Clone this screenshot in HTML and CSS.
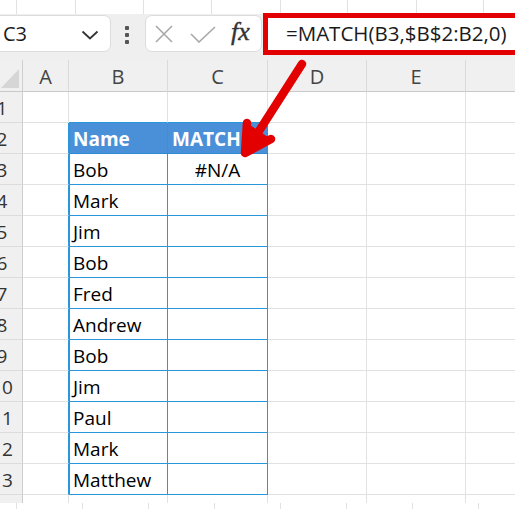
FILE: index.html
```html
<!DOCTYPE html>
<html>
<head>
<meta charset="utf-8">
<link rel="stylesheet" href="styles.css">
</head>
<body>
<div class="page">
  <div class="topstrip">
    <span class="ts w16"></span><span class="ts w59"></span><span class="ts w68"></span><span class="ts w68"></span><span class="ts w69"></span><span class="ts w67"></span><span class="ts w69"></span><span class="ts w67"></span>
  </div>
  <div class="toolbar">
    <div class="namebox">
      <span class="nbtext">C3</span>
      <svg class="chev" width="18" height="10" viewBox="0 0 18 10"><path d="M1.5 1.5 L9 8.5 L16.5 1.5" fill="none" stroke="#333" stroke-width="1.8"/></svg>
    </div>
    <svg class="dots" width="6" height="20" viewBox="0 0 6 20"><rect x="1" y="2" width="4" height="4" rx="1" fill="#555"/><rect x="1" y="9" width="4" height="4" rx="1" fill="#555"/><rect x="1" y="16" width="4" height="4" rx="1" fill="#555"/></svg>
    <div class="fxbox">
      <svg class="xic" width="18" height="18" viewBox="0 0 18 18"><path d="M1 1 L17 17 M17 1 L1 17" stroke="#a8a8a8" stroke-width="1.6" fill="none"/></svg>
      <svg class="chk" width="26" height="17" viewBox="0 0 26 17"><path d="M1 8 L9 16 L25 1" stroke="#a8a8a8" stroke-width="1.6" fill="none"/></svg>
      <span class="fx">fx</span>
    </div>
    <div class="formula">=MATCH(B3,$B$2:B2,0)</div>
  </div>
  <div class="grid">
    <div class="hd corner"><svg width="20" height="22" viewBox="0 0 20 22"><path d="M19 2 L19 21 L1 21 Z" fill="#d6d6d6"/></svg></div>
    <div class="hd">A</div><div class="hd">B</div><div class="hd">C</div><div class="hd">D</div><div class="hd">E</div><div class="hd last"></div>

    <div class="rh"><span>1</span></div><div class="c"></div><div class="c topb"></div><div class="c topb"></div><div class="c"></div><div class="c"></div><div class="c last"></div>

    <div class="rh"><span>2</span></div><div class="c ta"></div><div class="c tb th">Name</div><div class="c tc th">MATCH</div><div class="c"></div><div class="c"></div><div class="c last"></div>

    <div class="rh"><span>3</span></div><div class="c ta"></div><div class="c tb">Bob</div><div class="c tc ctr">#N/A</div><div class="c"></div><div class="c"></div><div class="c last"></div>

    <div class="rh"><span>4</span></div><div class="c ta"></div><div class="c tb">Mark</div><div class="c tc"></div><div class="c"></div><div class="c"></div><div class="c last"></div>

    <div class="rh"><span>5</span></div><div class="c ta"></div><div class="c tb">Jim</div><div class="c tc"></div><div class="c"></div><div class="c"></div><div class="c last"></div>

    <div class="rh"><span>6</span></div><div class="c ta"></div><div class="c tb">Bob</div><div class="c tc"></div><div class="c"></div><div class="c"></div><div class="c last"></div>

    <div class="rh"><span>7</span></div><div class="c ta"></div><div class="c tb">Fred</div><div class="c tc"></div><div class="c"></div><div class="c"></div><div class="c last"></div>

    <div class="rh"><span>8</span></div><div class="c ta"></div><div class="c tb">Andrew</div><div class="c tc"></div><div class="c"></div><div class="c"></div><div class="c last"></div>

    <div class="rh"><span>9</span></div><div class="c ta"></div><div class="c tb">Bob</div><div class="c tc"></div><div class="c"></div><div class="c"></div><div class="c last"></div>

    <div class="rh"><span>10</span></div><div class="c ta"></div><div class="c tb">Jim</div><div class="c tc"></div><div class="c"></div><div class="c"></div><div class="c last"></div>

    <div class="rh"><span>11</span></div><div class="c ta"></div><div class="c tb">Paul</div><div class="c tc"></div><div class="c"></div><div class="c"></div><div class="c last"></div>

    <div class="rh"><span>12</span></div><div class="c ta"></div><div class="c tb">Mark</div><div class="c tc"></div><div class="c"></div><div class="c"></div><div class="c last"></div>

    <div class="rh"><span>13</span></div><div class="c ta"></div><div class="c tb">Matthew</div><div class="c tc"></div><div class="c"></div><div class="c"></div><div class="c last"></div>

    <div class="rh nb"></div><div class="c nb"></div><div class="c nb"></div><div class="c nb"></div><div class="c nb"></div><div class="c nb"></div><div class="c nb last"></div>
  </div>
  <div class="botstrip">
    <span class="ts w16"></span><span class="ts w66"></span><span class="ts w66"></span><span class="ts w66"></span><span class="ts w66"></span><span class="ts w66"></span><span class="ts w66"></span><span class="ts w66"></span>
  </div>
  <svg class="arrow" width="515" height="509" viewBox="0 0 515 509">
    <path d="M302 64 L250 145" stroke="#e20000" stroke-width="8.5" stroke-linecap="round" fill="none"/>
    <path d="M247 123 L245 153 L271 139" stroke="#e20000" stroke-width="8.5" stroke-linecap="round" stroke-linejoin="round" fill="#e20000"/>
  </svg>
</div>
</body>
</html>
```
FILE: styles.css
```css
* { box-sizing: border-box; }
html, body { margin: 0; padding: 0; background: #fff; }
.page {
  position: relative;
  width: 515px;
  height: 509px;
  overflow: hidden;
  font-family: "Open Sans", "Noto Sans", sans-serif;
  color: #111;
}
.topstrip, .botstrip {
  display: flex;
  background: #fff;
}
.topstrip { height: 14px; }
.botstrip { height: 6px; }
.ts { display: block; height: 100%; flex: none; border-right: 1px solid #e2e2e2; }
.w16 { width: 17px; }
.w59 { width: 59px; }
.w66 { width: 66px; }
.w67 { width: 67px; }
.w68 { width: 68px; }
.w69 { width: 69px; }

.toolbar {
  display: flex;
  align-items: flex-start;
  height: 46px;
  background: #efefef;
}
.namebox {
  flex: none;
  margin-left: -8px;
  margin-top: 1px;
  width: 119px;
  height: 37px;
  background: #fff;
  border: 1px solid #dcdcdc;
  border-radius: 7px;
  display: flex;
  align-items: center;
  padding-left: 10px;
}
.nbtext {
  font-size: 20px;
  color: #1a1a1a;
  flex: 1;
}
.chev { margin-right: 11px; margin-top: 2px; }
.dots { flex: none; margin-left: 13px; margin-top: 10px; }
.fxbox {
  flex: none;
  margin-left: 15px;
  margin-top: 1px;
  width: 117px;
  height: 37px;
  background: #fff;
  border: 1px solid #dcdcdc;
  border-radius: 7px;
  display: flex;
  align-items: center;
  padding-left: 9px;
}
.xic { margin-top: 1px; }
.chk { margin-left: 17px; margin-top: 1px; }
.fx {
  margin-left: 15px;
  font-family: "Liberation Serif", "DejaVu Serif", serif;
  font-style: italic;
  font-size: 26px;
  color: #333;
  line-height: 1;
  margin-top: -3px;
  -webkit-text-stroke: 0.4px #333;
}
.formula {
  flex: none;
  margin-left: 1px;
  margin-top: -1px;
  width: 262px;
  height: 42px;
  border: 5px solid #e20000;
  background: #fff;
  font-size: 20.5px;
  color: #1a1a1a;
  line-height: 31px;
  padding-left: 18px;
  white-space: nowrap;
}

.grid {
  display: grid;
  grid-template-columns: 23px 46px 99px 100px 99px 99px 1fr;
  grid-template-rows: 32px repeat(13, 31px) 8px;
}
.hd {
  background: #f0f0f0;
  border-right: 1px solid #dadada;
  border-bottom: 1px solid #c9c9c9;
  text-align: center;
  font-size: 20px;
  color: #444;
  line-height: 29px;
  padding-top: 2px;
}
.hd.corner { padding-top: 7px; text-align: left; line-height: 0; border-right-color: #cfcfcf; }
.hd.last, .c.last { border-right: none; }
.rh {
  background: #f0f0f0;
  border-right: 1px solid #cdcdcd;
  border-bottom: 1px solid #dcdcdc;
  overflow: hidden;
  position: relative;
}
.rh span {
  display: block;
  width: 40px;
  margin-left: -18px;
  text-align: center;
  font-size: 19px;
  color: #333;
  line-height: 30px;
  padding-top: 1px;
}
.rh.nb { border-bottom: none; }
.c {
  border-right: 1px solid #e1e1e1;
  border-bottom: 1px solid #e1e1e1;
  font-size: 19px;
  line-height: 30px;
  padding: 1px 0 0 4px;
  white-space: nowrap;
  overflow: hidden;
  color: #000;
}
.c.nb { border-bottom: none; }
.topb { border-bottom-color: #2a96dc; }
.ta { border-right-color: #2a96dc; }
.tb {
  border-right-color: #2a96dc;
  border-bottom-color: #2a96dc;
  box-shadow: inset 1px 0 0 #2a96dc;
}
.tc {
  border-right-color: #2a96dc;
  border-bottom-color: #2a96dc;
}
.th {
  background: #4a90d9;
  color: #fff;
  font-weight: bold;
  border-bottom-color: #2a8ad4;
}
.tc.th { border-right-color: #2a96dc; }
.ctr { text-align: center; padding-left: 0; }

.arrow {
  position: absolute;
  left: 0;
  top: 0;
  pointer-events: none;
}
```
